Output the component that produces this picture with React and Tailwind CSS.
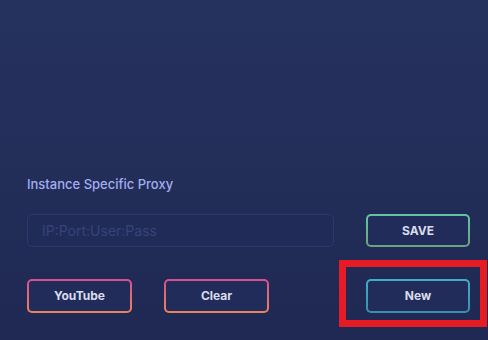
export default function App() {
  const font = { fontFamily: 'Inter, "Liberation Sans", sans-serif' }

  return (
    <div
      className="relative w-[488px] h-[340px] overflow-hidden bg-gradient-to-b from-[#26325e] to-[#1f2953]"
      style={font}
    >
      <div className="px-[27px] pt-[176px] w-[497px]">
        {/* Label */}
        <div className="text-[13px] font-medium leading-[16px] text-[#a2aef2]">
          Instance Specific Proxy
        </div>

        {/* Proxy row */}
        <div className="flex items-center mt-[22px] w-[443px] justify-between">
          <div className="w-[307px] h-[33px] rounded-[5px] border border-[#2d396b] bg-[#212b58] flex items-center px-[14px]">
            <input
              type="text"
              placeholder="IP:Port:User:Pass"
              className="bg-transparent outline-none border-none text-[14px] w-full text-[#c0c8f0] placeholder-[#37437a]"
            />
          </div>
          <div className="w-[104px] h-[33px] rounded-[5px] p-[2px] bg-gradient-to-b from-[#5ec7a2] to-[#6aa27e]">
            <button className="w-full h-full rounded-[3px] bg-[#222c5a] text-[12px] font-bold text-[#d9ddeb]">
              SAVE
            </button>
          </div>
        </div>

        {/* Action row */}
        <div className="flex items-center mt-[32px] w-[443px]">
          <div className="w-[105px] h-[34px] rounded-[5px] p-[2px] bg-gradient-to-b from-[#d1508c] to-[#e9845c]">
            <button className="w-full h-full rounded-[3px] bg-[#222c5a] text-[12px] font-bold text-[#d9ddeb]">
              YouTube
            </button>
          </div>
          <div className="ml-[32px] w-[105px] h-[34px] rounded-[5px] p-[2px] bg-gradient-to-b from-[#d1508c] to-[#e9845c]">
            <button className="w-full h-full rounded-[3px] bg-[#222c5a] text-[12px] font-bold text-[#d9ddeb]">
              Clear
            </button>
          </div>
          <div className="ml-auto w-[104px] h-[34px] rounded-[5px] p-[2px] bg-gradient-to-b from-[#3fb0c8] to-[#3690b0]">
            <button className="w-full h-full rounded-[3px] bg-[#222c5a] text-[12px] font-bold text-[#d9ddeb]">
              New
            </button>
          </div>
        </div>
      </div>

      {/* Red highlight annotation */}
      <div className="absolute left-[339px] top-[260px] w-[148px] h-[67px] border-[7px] border-[#e61b23]" />
    </div>
  )
}
